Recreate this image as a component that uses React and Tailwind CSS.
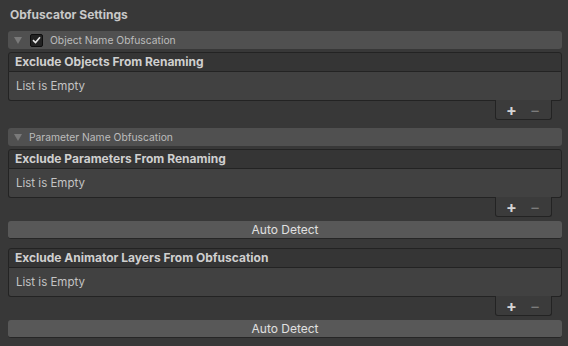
import React from 'react'

function FoldoutBar({ label, checkbox }) {
  return (
    <div className="ml-[8px] mr-[6px] flex h-[18px] items-center rounded-[3px] bg-[#505050] pl-[6px]">
      <svg width="8" height="7" viewBox="0 0 8 7" className="shrink-0">
        <polygon points="0,0 8,0 4,7" fill="#7a7a7a" />
      </svg>
      {checkbox && (
        <div className="ml-[8px] flex h-[13px] w-[13px] items-center justify-center rounded-[2px] border border-[#0e0e0e] bg-[#222222]">
          <svg width="9" height="8" viewBox="0 0 9 8">
            <path d="M1 4.2 L3.5 6.6 L8 1.2" fill="none" stroke="#e6e6e6" strokeWidth="1.6" />
          </svg>
        </div>
      )}
      <span className="ml-[7px] pt-px text-[10.3px] leading-none text-[#bcbcbc]">{label}</span>
    </div>
  )
}

function ReorderList({ title }) {
  return (
    <div className="ml-[8px] mr-[6px]">
      <div className="flex h-[20px] items-center rounded-t-[3px] border border-[#232323] bg-[#353535] pl-[6px]">
        <span className="text-[12px] font-bold leading-none text-[#cfcfcf]">{title}</span>
      </div>
      <div className="flex h-[29px] items-center rounded-b-[3px] border-x border-b border-[#232323] bg-[#414141] pl-[7px] pt-[2px]">
        <span className="text-[11.5px] leading-none text-[#c4c4c4]">List is Empty</span>
      </div>
      <div className="flex justify-end pr-[10px]">
        <div className="-mt-px flex h-[20px] w-[57px] items-center rounded-b-[3px] border-x border-b border-[#232323] bg-[#3b3b3b]">
          <span className="ml-[10px] text-[16px] font-bold leading-none text-[#d4d4d4]">+</span>
          <span className="ml-[13px] text-[16px] leading-none text-[#7c7c7c]">−</span>
        </div>
      </div>
    </div>
  )
}

function AutoDetect() {
  return (
    <div className="ml-[8px] mr-[6px] flex h-[18px] items-center justify-center rounded-[3px] border-b border-[#262626] bg-[#585858]">
      <span className="text-[12px] leading-none text-[#e0e0e0]">Auto Detect</span>
    </div>
  )
}

export default function App() {
  return (
    <div className="h-[346px] w-[568px] overflow-hidden bg-[#383838]" style={{ fontFamily: 'Inter, "Noto Sans", sans-serif' }}>
      <div className="h-[31px] pl-[10px] pt-[9px] text-[12px] leading-none">
        <span className="font-bold text-[#c8c8c8]">Obfuscator Settings</span>
      </div>

      {/* Object names */}
      <FoldoutBar label="Object Name Obfuscation" checkbox />
      <div className="mt-[3px]">
        <ReorderList title="Exclude Objects From Renaming" />
      </div>

      {/* Parameters */}
      <div className="mt-[8px]">
        <FoldoutBar label="Parameter Name Obfuscation" />
      </div>
      <div className="mt-[3px]">
        <ReorderList title="Exclude Parameters From Renaming" />
      </div>
      <div className="mt-[4px]">
        <AutoDetect />
      </div>

      {/* Animator layers */}
      <div className="mt-[9px]">
        <ReorderList title="Exclude Animator Layers From Obfuscation" />
      </div>
      <div className="mt-[4px]">
        <AutoDetect />
      </div>
    </div>
  )
}
